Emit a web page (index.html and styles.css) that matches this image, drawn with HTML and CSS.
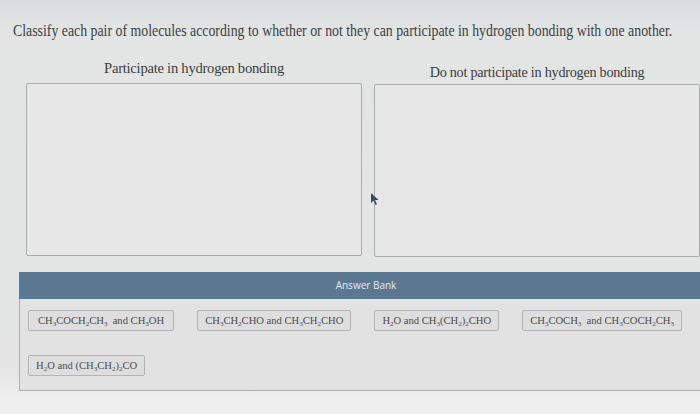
FILE: index.html
```html
<!DOCTYPE html>
<html lang="en">
<head>
<meta charset="UTF-8" />
<meta name="viewport" content="width=device-width, initial-scale=1" />
<title>Hydrogen Bonding Sort</title>
<link rel="stylesheet" href="styles.css">
</head>
<body>

<p class="prompt">Classify each pair of molecules according to whether or not they can participate in hydrogen bonding with one another.</p>

<div class="columns">
  <div class="column">
    <div class="column-title">Participate in hydrogen bonding</div>
    <div class="dropzone"></div>
  </div>
  <div class="column">
    <div class="column-title lower">Do not participate in hydrogen bonding</div>
    <div class="dropzone"></div>
  </div>
</div>

<div class="bank">
  <div class="bank-head">Answer Bank</div>
  <div class="bank-body">
    <span class="chip wide">CH<sub>3</sub>COCH<sub>2</sub>CH<sub>3</sub> &nbsp;and CH<sub>3</sub>OH</span>
    <span class="chip">CH<sub>3</sub>CH<sub>2</sub>CHO and CH<sub>3</sub>CH<sub>2</sub>CHO</span>
    <span class="chip">H<sub>2</sub>O and CH<sub>3</sub>(CH<sub>2</sub>)<sub>2</sub>CHO</span>
    <span class="chip">CH<sub>3</sub>COCH<sub>3</sub> &nbsp;and CH<sub>3</sub>COCH<sub>2</sub>CH<sub>3</sub></span>
    <span class="chip">H<sub>2</sub>O and (CH<sub>3</sub>CH<sub>2</sub>)<sub>2</sub>CO</span>
  </div>
</div>

<!-- mouse pointer resting between the two drop areas -->
<svg class="pointer" width="10" height="14" viewBox="0 0 10 14">
  <path d="M1 1 L1 11 L3.5 8.5 L5.5 13 L7 12.3 L5 8 L8.5 8 Z" fill="#3d4a55"/>
</svg>

</body>
</html>
```

FILE: styles.css
```css
html, body {
  margin: 0; padding: 0;
}
body {
  position: relative;
  width: 700px;
  height: 414px;
  overflow: hidden;
  background: linear-gradient(180deg, #d9dcdd 0%, #e3e5e5 8%, #e4e5e4 90%, #eeefee 96%);
  font-family: "Liberation Serif", "Times New Roman", serif;
  color: #3a3d40;
}
/* the prompt font runs narrow, so squeeze it a little */
.prompt {
  margin: 0 0 0 13px;
  padding-top: 21px;
  font-size: 16.5px;
  line-height: 19px;
  white-space: nowrap;
  transform: scaleX(0.838);
  transform-origin: left center;
}
.columns {
  display: grid;
  grid-template-columns: 336px 326px;
  column-gap: 12px;
  margin: 20px 0 0 26px;
}
.column-title {
  text-align: center;
  font-size: 14.6px;
  letter-spacing: -0.25px;
  height: 23px;
}
.column-title.lower {
  padding-top: 4px;
  height: 20px;
  font-size: 14.2px;
}
.dropzone {
  height: 171px;
  border: 1.5px solid #a9abac;
  border-radius: 2px;
  background: #e6e7e6;
}
.bank {
  margin: 15px 0 0 19px;
  width: 683px;
}
.bank-head {
  height: 27px;
  line-height: 27px;
  background: #5b7891;
  color: #e6ecf1;
  text-align: center;
  font-family: "Open Sans", "Liberation Sans", sans-serif;
  font-size: 10px;
  padding-left: 11px;
}
.bank-body {
  height: 92px;
  box-sizing: border-box;
  border: 1.5px solid #acaeaf;
  border-top: none;
  padding: 11px 0 0 8px;
  display: flex;
  flex-wrap: wrap;
  align-content: flex-start;
  column-gap: 23px;
  row-gap: 24px;
  background: #e1e2e1;
}
.chip {
  display: inline-block;
  height: 21px;
  line-height: 20px;
  box-sizing: border-box;
  padding: 0 7px;
  border: 1px solid #b2b4b5;
  border-radius: 2px;
  background: #dddedd;
  font-size: 10.6px;
  color: #4a4d50;
  white-space: nowrap;
}
.chip.wide {
  padding: 0 9px;
}
.chip sub {
  font-size: 7px;
  line-height: 0;
  vertical-align: -2px;
}
.pointer {
  position: absolute;
  left: 370px;
  top: 192px;
}
```
